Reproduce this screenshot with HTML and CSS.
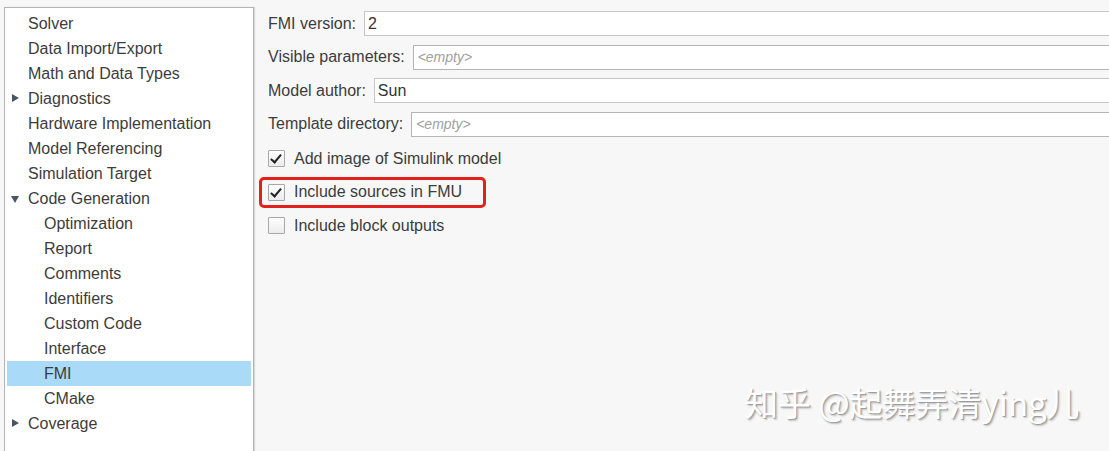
FILE: index.html
```html
<!DOCTYPE html>
<html lang="en">

<head>
  <meta charset="UTF-8" />
  <meta name="viewport" content="width=device-width, initial-scale=1.0" />
  <title>Configuration Parameters - FMI</title>
  <link rel="stylesheet" href="styles.css">
</head>

<body>
  <main class="window">
    <nav class="tree">
      <div class="node">Solver</div>
      <div class="node">Data Import/Export</div>
      <div class="node">Math and Data Types</div>
      <div class="node closed">Diagnostics</div>
      <div class="node">Hardware Implementation</div>
      <div class="node">Model Referencing</div>
      <div class="node">Simulation Target</div>
      <div class="node open">Code Generation</div>
      <div class="node child">Optimization</div>
      <div class="node child">Report</div>
      <div class="node child">Comments</div>
      <div class="node child">Identifiers</div>
      <div class="node child">Custom Code</div>
      <div class="node child">Interface</div>
      <div class="node child selected">FMI</div>
      <div class="node child">CMake</div>
      <div class="node closed">Coverage</div>
    </nav>

    <section class="pane">
      <div class="field">
        <label>FMI version:</label>
        <div class="input">2</div>
      </div>
      <div class="field">
        <label>Visible parameters:</label>
        <div class="input empty">&lt;empty&gt;</div>
      </div>
      <div class="field">
        <label>Model author:</label>
        <div class="input">Sun</div>
      </div>
      <div class="field">
        <label>Template directory:</label>
        <div class="input empty">&lt;empty&gt;</div>
      </div>

      <div class="checks">
        <div class="check"><span class="box on"></span>Add image of Simulink model</div>
        <div class="check marked"><span class="box on"></span>Include sources in FMU</div>
        <div class="check"><span class="box"></span>Include block outputs</div>
      </div>
    </section>
  </main>
  <div class="watermark">知乎 @起舞弄清ying儿</div>
</body>

</html>
```

FILE: styles.css
```css
html,
body {
  margin: 0;
  height: 100%;
  overflow: hidden;
}

body {
  background-color: #f7f7f7;
  font-family: "Liberation Sans", Arial, sans-serif;
  font-size: 16px;
  color: #3c3c3c;
}

.window {
  display: flex;
  height: 100%;
}

.tree {
  flex: 0 0 248px;
  margin: 7px 0 0 4px;
  padding-top: 3px;
  background-color: #fff;
  border: 1px solid #b4b4b4;
  border-bottom: none;
  box-shadow: 1px 0 1px #d8d8d8;
}

.node {
  position: relative;
  height: 25px;
  line-height: 25px;
  margin: 0 2px;
  padding-left: 21px;
  white-space: nowrap;
}

.node.child {
  padding-left: 37px;
}

.node.selected {
  background-color: #a9daf8;
}

.node.closed::before,
.node.open::before {
  content: "";
  position: absolute;
  left: 5px;
  top: 8px;
  border-style: solid;
  border-color: transparent;
}

.node.closed::before {
  border-width: 4.5px 0 4.5px 7px;
  border-left-color: #4a5563;
}

.node.open::before {
  top: 10px;
  left: 4px;
  border-width: 7px 4.5px 0 4.5px;
  border-top-color: #4a5563;
}

.pane {
  flex: 1;
  padding: 11px 0 0 14px;
  min-width: 0;
}

.field {
  display: flex;
  align-items: center;
  gap: 8px;
  height: 25px;
  margin-bottom: 8.6px;
  white-space: nowrap;
}

.field label {
  flex: none;
}

.input {
  flex: 1;
  height: 23px;
  line-height: 23px;
  padding-left: 3px;
  margin-right: -4px;
  background-color: #fff;
  border: 1px solid #c6c6c6;
  color: #333;
}

.input.empty {
  padding-left: 4px;
  border-color: #b5b5b5;
  font-size: 14px;
  font-style: italic;
  color: #a0a0a0;
}

.checks {
  display: flex;
  flex-direction: column;
  align-items: flex-start;
  gap: 2.5px;
  margin-top: -2px;
}

.check {
  display: flex;
  align-items: center;
  gap: 9px;
  height: 25px;
  padding: 0 21px 0 6px;
  margin-left: -9px;
  border: 3px solid transparent;
  border-radius: 5px;
}

.check.marked {
  border-color: #e3201b;
}

.box {
  position: relative;
  width: 15px;
  height: 15px;
  border: 1px solid #a8a8a8;
  background: linear-gradient(#fdfdfd, #ececec);
  border-radius: 1px;
}

.box.on::after {
  content: "";
  position: absolute;
  left: 4px;
  top: 1px;
  width: 4px;
  height: 9px;
  border: solid #222;
  border-width: 0 2px 2px 0;
  transform: rotate(40deg);
}

.watermark {
  position: absolute;
  left: 745px;
  top: 378px;
  font-family: "Noto Sans CJK SC", sans-serif;
  font-size: 33px;
  color: #fff;
  text-shadow: 1px 1px 1px #9a9a9a, 2px 2px 2px #c4c4c4;
  white-space: nowrap;
}
```
